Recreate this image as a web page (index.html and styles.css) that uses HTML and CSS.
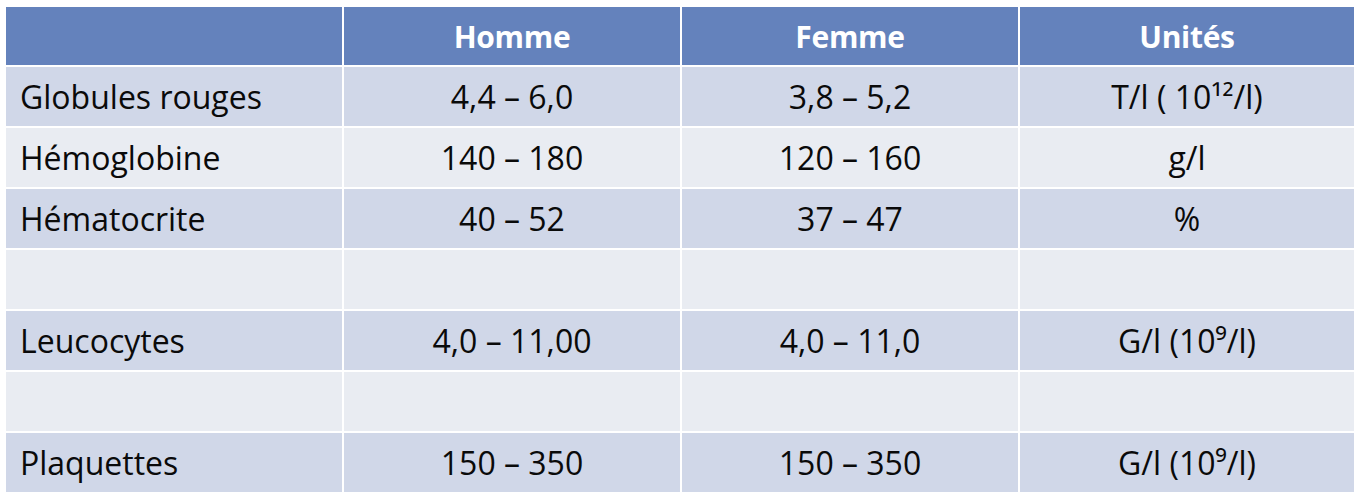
FILE: index.html
```html
<!DOCTYPE html>
<html lang="fr">
<head>
<meta charset="utf-8">
<title>Valeurs normales</title>
<link rel="stylesheet" href="styles.css">
</head>
<body>
<div class="table">
  <div class="cell head"></div>
  <div class="cell head c">Homme</div>
  <div class="cell head c">Femme</div>
  <div class="cell head c">Unités</div>

  <div class="cell odd">Globules rouges</div>
  <div class="cell odd c">4,4 – 6,0</div>
  <div class="cell odd c">3,8 – 5,2</div>
  <div class="cell odd c">T/l ( 10¹²/l)</div>

  <div class="cell even">Hémoglobine</div>
  <div class="cell even c">140 – 180</div>
  <div class="cell even c">120 – 160</div>
  <div class="cell even c">g/l</div>

  <div class="cell odd">Hématocrite</div>
  <div class="cell odd c">40 – 52</div>
  <div class="cell odd c">37 – 47</div>
  <div class="cell odd c">%</div>

  <div class="cell even"></div>
  <div class="cell even c"></div>
  <div class="cell even c"></div>
  <div class="cell even c"></div>

  <div class="cell odd">Leucocytes</div>
  <div class="cell odd c">4,0 – 11,00</div>
  <div class="cell odd c">4,0 – 11,0</div>
  <div class="cell odd c">G/l (10⁹/l)</div>

  <div class="cell even"></div>
  <div class="cell even c"></div>
  <div class="cell even c"></div>
  <div class="cell even c"></div>

  <div class="cell odd">Plaquettes</div>
  <div class="cell odd c">150 – 350</div>
  <div class="cell odd c">150 – 350</div>
  <div class="cell odd c">G/l (10⁹/l)</div>
</div>
</body>
</html>
```
FILE: styles.css
```css
html, body {
  margin: 0;
  padding: 0;
  background: #ffffff;
}
body {
  padding: 7px 9px 0 6px;
  font-family: "Open Sans", Lato, "Liberation Sans", sans-serif;
}
.table {
  width: 1348px;
  display: grid;
  grid-template-columns: 336px 336px 336px 334px;
  grid-template-rows: 58px repeat(7, 59px);
  column-gap: 2px;
  row-gap: 2px;
}
.cell {
  display: flex;
  align-items: center;
  padding: 0 14px;
  font-size: 32px;
  color: #0a0a0a;
}
.c {
  justify-content: center;
  padding: 0;
}
.head {
  background: #6482bc;
  color: #ffffff;
  font-weight: 700;
  font-size: 30px;
  letter-spacing: -0.3px;
}
.odd {
  background: #d0d7e8;
}
.even {
  background: #e9ecf2;
}
```
